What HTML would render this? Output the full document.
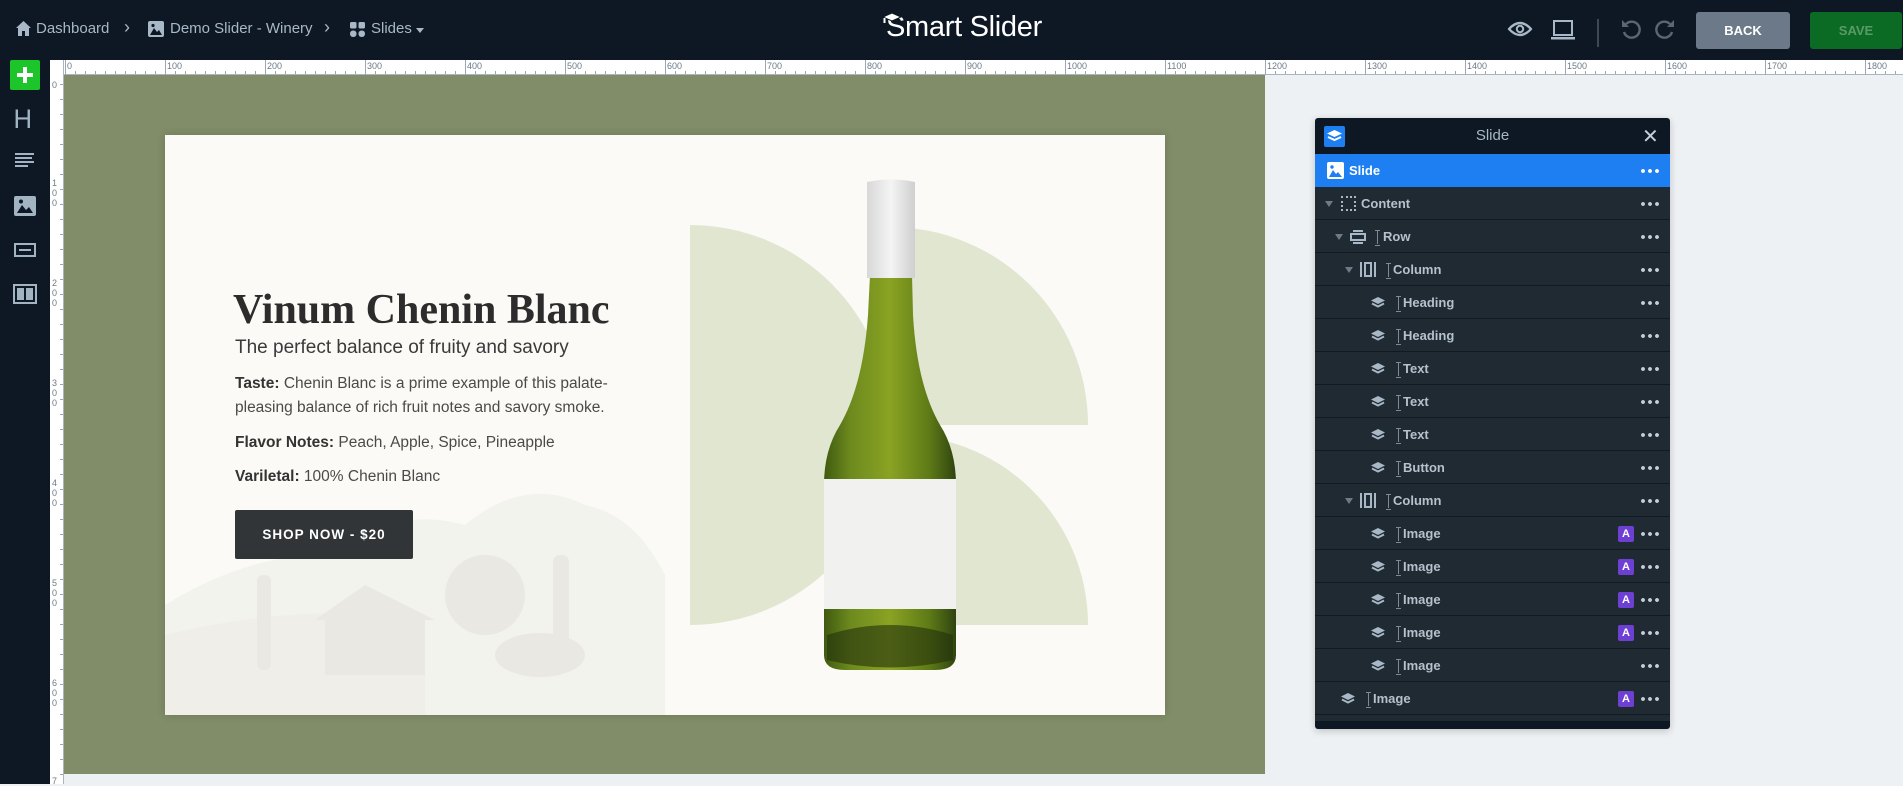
<!DOCTYPE html>
<html><head><meta charset="utf-8"><style>
*{margin:0;padding:0;box-sizing:border-box}
body{width:1903px;height:784px;overflow:hidden;background:#eef1f4;font-family:"Liberation Sans",sans-serif;position:relative}
.abs{position:absolute}
#top{left:0;top:0;width:1903px;height:60px;background:#0d1824}
.bc{top:20px;font-size:15px;color:#a9b8c6;white-space:nowrap}
#side{left:0;top:60px;width:50px;height:724px;background:#0d1824}
#rt{left:50px;top:60px;width:1853px;height:15px;background:#fff;border-bottom:1px solid #aab5c0;
 background-image:repeating-linear-gradient(90deg,#9aa6b2 0 1px,transparent 1px 10px);background-size:100% 4px;background-repeat:no-repeat;background-position:15px 11px}
#rl{left:50px;top:60px;width:14px;height:724px;background:#fff;border-right:1px solid #aab5c0;
 background-image:repeating-linear-gradient(180deg,#9aa6b2 0 1px,transparent 1px 15px);background-size:4px 100%;background-repeat:no-repeat;background-position:10px 24px}
.rlab{font-size:9px;color:#6d7a87;top:61px}
.rmaj{top:60px;width:1px;height:15px;background:#9aa6b2}
.vlab{left:52px;font-size:9px;color:#6d7a87;line-height:10px;width:8px}
#canvas{left:64px;top:75px;width:1201px;height:699px;background:#818c68}
#slide{left:165px;top:135px;width:1000px;height:580px;background:#fbfaf6;overflow:hidden;box-shadow:0 0 8px rgba(0,0,0,.15)}
#panel{left:1315px;top:118px;width:355px;height:611px;background:#0d1824;border-radius:3px;overflow:hidden;box-shadow:0 2px 8px rgba(0,0,0,.2)}
.row{position:absolute;left:0;width:355px;height:33px;background:#1f2a33;border-bottom:1px solid #111a22;color:#b5c1cc;font-size:13px;font-weight:bold}
.row span.t{position:absolute;top:9px}
.dots{position:absolute;right:11px;top:15px;width:18px;height:4px;background:radial-gradient(circle at 2px 2px,#c5cfd8 1.8px,transparent 2px) 0 0/7px 4px repeat-x}
.badge{position:absolute;left:303px;top:9px;width:16px;height:16px;background:#6e3fd3;color:#fff;font-size:11px;text-align:center;line-height:16px;border-radius:2px}
.ib{position:absolute;top:10px;width:6px;height:14px}
.ib:before{content:"";position:absolute;left:2px;top:0;width:1px;height:14px;background:#7d8b97}
.ib:after{content:"";position:absolute;left:0;top:0;width:5px;height:14px;border-top:1px solid #7d8b97;border-bottom:1px solid #7d8b97}
.arr{position:absolute;top:14px;width:0;height:0;border-left:4px solid transparent;border-right:4px solid transparent;border-top:6px solid #6d7a87}
.ly{position:absolute;top:9px}
.p{position:absolute;left:70px;font-size:15.5px;color:#4a4a4a;line-height:24px;white-space:nowrap}
.p b{color:#333}
</style></head><body>
<div id="top" class="abs"></div>
<svg class="abs" style="left:15px;top:20px" width="17" height="17" viewBox="0 0 17 17"><path d="M8.5 1 L1 8 L3 8 L3 16 L7 16 L7 11 L10 11 L10 16 L14 16 L14 8 L16 8 Z" fill="#a9b8c6"/></svg>
<div class="abs bc" style="left:36px">Dashboard</div>
<div class="abs bc" style="left:124px;top:17px;font-size:18px">›</div>
<svg class="abs" style="left:148px;top:21px" width="16" height="16"><rect x="0" y="0" width="16" height="16" rx="2" fill="#a9b8c6"/><path d="M2 14 L6 7 L9 11 L11 9 L14 14Z" fill="#0d1824"/><circle cx="5" cy="4.5" r="1.6" fill="#0d1824"/></svg>
<div class="abs bc" style="left:170px">Demo Slider - Winery</div>
<div class="abs bc" style="left:324px;top:17px;font-size:18px">›</div>
<svg class="abs" style="left:350px;top:22px" width="15" height="15"><rect x="0" y="0" width="6.5" height="6.5" rx="1.5" fill="#a9b8c6"/><rect x="8.5" y="0" width="6.5" height="6.5" rx="1.5" fill="#a9b8c6"/><rect x="0" y="8.5" width="6.5" height="6.5" rx="3" fill="#a9b8c6"/><rect x="8.5" y="8.5" width="6.5" height="6.5" rx="3" fill="#a9b8c6"/></svg>
<div class="abs bc" style="left:371px">Slides</div>
<div class="abs" style="left:416px;top:28px;border-left:4px solid transparent;border-right:4px solid transparent;border-top:5px solid #a9b8c6"></div>
<div class="abs" style="left:886px;top:11px;font-size:29px;color:#fff;letter-spacing:-0.3px">Smart Slider</div>
<svg class="abs" style="left:881px;top:12px" width="22" height="14"><path d="M2 5 L11 1 L20 5 L11 9Z" fill="#fff" stroke="#0d1824" stroke-width="1"/><path d="M3.5 6 v5" stroke="#fff" stroke-width="2"/></svg>
<svg class="abs" style="left:1507px;top:17px" width="26" height="24" viewBox="0 0 26 24"><path d="M2 12 Q13 0 24 12 Q13 24 2 12Z" fill="none" stroke="#a9b8c6" stroke-width="2.4" stroke-linejoin="round"/><circle cx="13" cy="12" r="3.2" fill="none" stroke="#a9b8c6" stroke-width="2"/></svg>
<svg class="abs" style="left:1551px;top:19px" width="24" height="22"><rect x="3" y="2" width="18" height="14" fill="none" stroke="#a9b8c6" stroke-width="2"/><rect x="0" y="18" width="24" height="2.5" fill="#a9b8c6"/></svg>
<div class="abs" style="left:1597px;top:19px;width:2px;height:28px;background:#3c4854"></div>
<svg class="abs" style="left:1620px;top:17px" width="22" height="24" viewBox="0 0 22 24"><path d="M6 7 A8 8 0 1 1 4 15" fill="none" stroke="#5a6674" stroke-width="2.4"/><path d="M2 3 L2 10 L9 10Z" fill="#5a6674"/></svg>
<svg class="abs" style="left:1654px;top:17px" width="22" height="24" viewBox="0 0 22 24"><path d="M16 7 A8 8 0 1 0 18 15" fill="none" stroke="#5a6674" stroke-width="2.4"/><path d="M20 3 L20 10 L13 10Z" fill="#5a6674"/></svg>
<div class="abs" style="left:1696px;top:12px;width:94px;height:37px;background:#6c7988;border-radius:3px;color:#fff;font-weight:bold;font-size:13px;text-align:center;line-height:37px">BACK</div>
<div class="abs" style="left:1810px;top:12px;width:92px;height:37px;background:#0b6b24;border-radius:3px;color:#5a9a67;font-weight:bold;font-size:13px;text-align:center;line-height:37px">SAVE</div>

<div id="side" class="abs"></div>
<div class="abs" style="left:10px;top:60px;width:30px;height:30px;background:#1cc52a;border-radius:2px"></div>
<div class="abs" style="left:17px;top:73px;width:16px;height:4px;background:#fff"></div>
<div class="abs" style="left:23px;top:67px;width:4px;height:16px;background:#fff"></div>
<div class="abs" style="left:13px;top:104px;font-size:27px;color:#a2b3c2;transform:scaleX(.95)">H</div>
<svg class="abs" style="left:15px;top:153px" width="20" height="15"><g fill="#a2b3c2"><rect y="0" width="19" height="2"/><rect y="4" width="17" height="2"/><rect y="8" width="19" height="2"/><rect y="12" width="13" height="2"/></g></svg>
<svg class="abs" style="left:14px;top:196px" width="22" height="20"><rect width="22" height="20" rx="2" fill="#a2b3c2"/><path d="M3 17 L8 9 L12 14 L15 11 L19 17Z" fill="#0d1824"/><circle cx="7" cy="5.5" r="2" fill="#0d1824"/></svg>
<svg class="abs" style="left:14px;top:243px" width="22" height="14"><rect x="1" y="1" width="20" height="12" fill="none" stroke="#a2b3c2" stroke-width="2"/><rect x="5" y="6" width="12" height="2" fill="#a2b3c2"/></svg>
<svg class="abs" style="left:13px;top:284px" width="24" height="20"><rect x="1" y="1" width="22" height="18" fill="none" stroke="#a2b3c2" stroke-width="2"/><rect x="4" y="4" width="7" height="12" fill="#a2b3c2"/><rect x="13" y="4" width="7" height="12" fill="#a2b3c2"/></svg>

<div id="rt" class="abs"></div>
<div id="rl" class="abs"></div>
<div class="abs rmaj" style="left:65px"></div><div class="abs rlab" style="left:67px">0</div>
<div class="abs rmaj" style="left:165px"></div><div class="abs rlab" style="left:167px">100</div>
<div class="abs rmaj" style="left:265px"></div><div class="abs rlab" style="left:267px">200</div>
<div class="abs rmaj" style="left:365px"></div><div class="abs rlab" style="left:367px">300</div>
<div class="abs rmaj" style="left:465px"></div><div class="abs rlab" style="left:467px">400</div>
<div class="abs rmaj" style="left:565px"></div><div class="abs rlab" style="left:567px">500</div>
<div class="abs rmaj" style="left:665px"></div><div class="abs rlab" style="left:667px">600</div>
<div class="abs rmaj" style="left:765px"></div><div class="abs rlab" style="left:767px">700</div>
<div class="abs rmaj" style="left:865px"></div><div class="abs rlab" style="left:867px">800</div>
<div class="abs rmaj" style="left:965px"></div><div class="abs rlab" style="left:967px">900</div>
<div class="abs rmaj" style="left:1065px"></div><div class="abs rlab" style="left:1067px">1000</div>
<div class="abs rmaj" style="left:1165px"></div><div class="abs rlab" style="left:1167px">1100</div>
<div class="abs rmaj" style="left:1265px"></div><div class="abs rlab" style="left:1267px">1200</div>
<div class="abs rmaj" style="left:1365px"></div><div class="abs rlab" style="left:1367px">1300</div>
<div class="abs rmaj" style="left:1465px"></div><div class="abs rlab" style="left:1467px">1400</div>
<div class="abs rmaj" style="left:1565px"></div><div class="abs rlab" style="left:1567px">1500</div>
<div class="abs rmaj" style="left:1665px"></div><div class="abs rlab" style="left:1667px">1600</div>
<div class="abs rmaj" style="left:1765px"></div><div class="abs rlab" style="left:1767px">1700</div>
<div class="abs rmaj" style="left:1865px"></div><div class="abs rlab" style="left:1867px">1800</div>
<div class="abs vlab" style="top:80px">0</div>
<div class="abs vlab" style="top:178px">1<br>0<br>0</div>
<div class="abs vlab" style="top:278px">2<br>0<br>0</div>
<div class="abs vlab" style="top:378px">3<br>0<br>0</div>
<div class="abs vlab" style="top:478px">4<br>0<br>0</div>
<div class="abs vlab" style="top:578px">5<br>0<br>0</div>
<div class="abs vlab" style="top:678px">6<br>0<br>0</div>
<div class="abs vlab" style="top:776px">7</div>

<div id="canvas" class="abs"></div>
<div id="slide" class="abs">
<svg class="abs" style="left:0;top:0" width="1000" height="580">
 <g fill="#efeee9">
  <path d="M0 470 Q80 420 160 420 Q230 370 300 390 Q360 340 420 370 Q470 380 500 440 L500 580 L0 580Z" opacity=".6"/>
  <path d="M0 500 Q120 470 260 480 L260 580 L0 580Z"/>
  <rect x="160" y="480" width="100" height="60" fill="#e9e8e3"/>
  <path d="M150 485 L200 450 L270 485Z" fill="#e9e8e3"/>
  <ellipse cx="320" cy="460" rx="40" ry="40" fill="#e9e8e3"/>
  <rect x="388" y="420" width="16" height="110" rx="7" fill="#e9e8e3"/>
  <rect x="92" y="440" width="14" height="95" rx="6" fill="#e9e8e3"/>
  <ellipse cx="375" cy="520" rx="45" ry="22" fill="#e9e8e3"/>
 </g>
 <g fill="#e1e6d0">
  <path d="M525 90 A200 200 0 0 1 525 490Z"/>
  <path d="M725 92 A198 198 0 0 1 923 290 L725 290Z"/>
  <path d="M725 300 A190 190 0 0 1 923 490 L725 490Z"/>
 </g>
 <defs>
  <linearGradient id="g" x1="0" x2="1"><stop offset="0" stop-color="#3f5a10"/><stop offset=".2" stop-color="#6d8a1e"/><stop offset=".5" stop-color="#8aa323"/><stop offset=".8" stop-color="#5d7a16"/><stop offset="1" stop-color="#2f4410"/></linearGradient>
  <linearGradient id="c" x1="0" x2="1"><stop offset="0" stop-color="#d8d8d8"/><stop offset=".5" stop-color="#f4f4f4"/><stop offset="1" stop-color="#cfcfcf"/></linearGradient>
 </defs>
 <path d="M705 140 L747 140 L748 180 Q752 250 775 290 Q791 315 791 350 L791 520 Q791 535 770 535 L680 535 Q659 535 659 520 L659 350 Q659 315 675 290 Q698 250 703 180Z" fill="url(#g)"/>
 <path d="M702 47 Q726 42 750 47 L750 143 L702 143Z" fill="url(#c)"/>
 <rect x="659" y="344" width="132" height="130" fill="#f1f1f0"/>
 <path d="M662 500 Q725 480 788 500 L788 525 Q725 540 662 525Z" fill="#23300c" opacity=".6"/>
</svg>
<div class="abs" style="left:68px;top:154px;font-family:'Liberation Serif',serif;font-weight:bold;font-size:42px;line-height:42px;color:#2c2c2c;white-space:nowrap">Vinum Chenin Blanc</div>
<div class="abs" style="left:70px;top:202px;font-size:19px;color:#3a3a3a;white-space:nowrap">The perfect balance of fruity and savory</div>
<div class="p" style="top:237px;white-space:normal;width:400px"><b>Taste:</b> Chenin Blanc is a prime example of this palate-pleasing balance of rich fruit notes and savory smoke.</div>
<div class="p" style="top:296px"><b>Flavor Notes:</b> Peach, Apple, Spice, Pineapple</div>
<div class="p" style="top:330px"><b>Variletal:</b> 100% Chenin Blanc</div>
<div class="abs" style="left:70px;top:375px;width:178px;height:49px;background:#323538;border-radius:2px;color:#fff;font-weight:bold;font-size:13.5px;letter-spacing:1px;text-align:center;line-height:49px">SHOP NOW - $20</div>
</div>

<div id="panel" class="abs">
 <div class="abs" style="left:9px;top:8px;width:21px;height:21px;background:#1d7ff2;border-radius:2px"></div>
 <svg class="abs" style="left:12px;top:12px" width="15" height="13"><path d="M7.5 0 L15 3.5 L7.5 7 L0 3.5Z" fill="#fff"/><path d="M1 7 L7.5 10 L14 7" fill="none" stroke="#fff" stroke-width="2"/></svg>
 <div class="abs" style="left:0;top:9px;width:355px;text-align:center;color:#a9b8c6;font-size:15px">Slide</div>
 <div class="abs" style="left:327px;top:6px;color:#c5cfd8;font-size:20px">✕</div>
 <div class="row" style="top:36px;background:#1d7ff2;border:none;color:#fff"><svg class="ly" style="left:12px;top:8px" width="17" height="17"><rect width="17" height="17" rx="2" fill="#fff"/><path d="M2 15 L6 8 L9 12 L11 10 L15 15Z" fill="#1d7ff2"/><circle cx="5" cy="5" r="1.7" fill="#1d7ff2"/></svg><span class="t" style="left:34px">Slide</span><div class="dots" style="background:radial-gradient(circle at 2px 2px,#fff 1.8px,transparent 2px) 0 0/7px 4px repeat-x"></div></div>

 <div class="row" style="top:69px"><i class="arr" style="left:10px"></i><div class="abs" style="left:26px;top:9px;width:15px;height:15px;border:2px dotted #a9b8c6"></div><span class="t" style="left:46px">Content</span><div class="dots"></div></div>
 <div class="row" style="top:102px"><i class="arr" style="left:20px"></i><svg class="ly" style="left:35px;top:10px" width="16" height="14"><rect x="3" y="0" width="10" height="2" fill="#a9b8c6"/><rect x="1" y="4" width="14" height="6" fill="none" stroke="#a9b8c6" stroke-width="2"/><rect x="3" y="12" width="10" height="2" fill="#a9b8c6"/></svg><i class="ib" style="left:60px"></i><span class="t" style="left:68px">Row</span><div class="dots"></div></div>
 <div class="row" style="top:135px"><i class="arr" style="left:30px"></i><svg class="ly" style="left:45px" width="16" height="15"><rect x="0" y="0" width="2" height="15" fill="#a9b8c6"/><rect x="5" y="1" width="6" height="13" fill="none" stroke="#a9b8c6" stroke-width="2"/><rect x="14" y="0" width="2" height="15" fill="#a9b8c6"/></svg><i class="ib" style="left:71px"></i><span class="t" style="left:78px">Column</span><div class="dots"></div></div>
</div>
<svg width="0" height="0" style="position:absolute"><defs><g id="lyr"><path d="M7 0 L14 3.5 L7 7 L0 3.5Z" fill="#a9b8c6"/><path d="M1 6.5 L7 9.5 L13 6.5" fill="none" stroke="#a9b8c6" stroke-width="2"/></g></defs></svg>
<div class="abs" style="left:1315px;top:286px;width:355px">
 <div class="row" style="top:0"><svg class="ly" style="left:56px;top:11px" width="14" height="11"><use href="#lyr"/></svg><i class="ib" style="left:81px"></i><span class="t" style="left:88px">Heading</span><div class="dots"></div></div>
 <div class="row" style="top:33px"><svg class="ly" style="left:56px;top:11px" width="14" height="11"><use href="#lyr"/></svg><i class="ib" style="left:81px"></i><span class="t" style="left:88px">Heading</span><div class="dots"></div></div>
 <div class="row" style="top:66px"><svg class="ly" style="left:56px;top:11px" width="14" height="11"><use href="#lyr"/></svg><i class="ib" style="left:81px"></i><span class="t" style="left:88px">Text</span><div class="dots"></div></div>
 <div class="row" style="top:99px"><svg class="ly" style="left:56px;top:11px" width="14" height="11"><use href="#lyr"/></svg><i class="ib" style="left:81px"></i><span class="t" style="left:88px">Text</span><div class="dots"></div></div>
 <div class="row" style="top:132px"><svg class="ly" style="left:56px;top:11px" width="14" height="11"><use href="#lyr"/></svg><i class="ib" style="left:81px"></i><span class="t" style="left:88px">Text</span><div class="dots"></div></div>
 <div class="row" style="top:165px"><svg class="ly" style="left:56px;top:11px" width="14" height="11"><use href="#lyr"/></svg><i class="ib" style="left:81px"></i><span class="t" style="left:88px">Button</span><div class="dots"></div></div>
 <div class="row" style="top:198px"><i class="arr" style="left:30px"></i><svg class="ly" style="left:45px" width="16" height="15"><rect x="0" y="0" width="2" height="15" fill="#a9b8c6"/><rect x="5" y="1" width="6" height="13" fill="none" stroke="#a9b8c6" stroke-width="2"/><rect x="14" y="0" width="2" height="15" fill="#a9b8c6"/></svg><i class="ib" style="left:71px"></i><span class="t" style="left:78px">Column</span><div class="dots"></div></div>
 <div class="row" style="top:231px"><svg class="ly" style="left:56px;top:11px" width="14" height="11"><use href="#lyr"/></svg><i class="ib" style="left:81px"></i><span class="t" style="left:88px">Image</span><div class="badge">A</div><div class="dots"></div></div>
 <div class="row" style="top:264px"><svg class="ly" style="left:56px;top:11px" width="14" height="11"><use href="#lyr"/></svg><i class="ib" style="left:81px"></i><span class="t" style="left:88px">Image</span><div class="badge">A</div><div class="dots"></div></div>
 <div class="row" style="top:297px"><svg class="ly" style="left:56px;top:11px" width="14" height="11"><use href="#lyr"/></svg><i class="ib" style="left:81px"></i><span class="t" style="left:88px">Image</span><div class="badge">A</div><div class="dots"></div></div>
 <div class="row" style="top:330px"><svg class="ly" style="left:56px;top:11px" width="14" height="11"><use href="#lyr"/></svg><i class="ib" style="left:81px"></i><span class="t" style="left:88px">Image</span><div class="badge">A</div><div class="dots"></div></div>
 <div class="row" style="top:363px"><svg class="ly" style="left:56px;top:11px" width="14" height="11"><use href="#lyr"/></svg><i class="ib" style="left:81px"></i><span class="t" style="left:88px">Image</span><div class="dots"></div></div>
 <div class="row" style="top:396px"><svg class="ly" style="left:26px;top:11px" width="14" height="11"><use href="#lyr"/></svg><i class="ib" style="left:51px"></i><span class="t" style="left:58px">Image</span><div class="badge">A</div><div class="dots"></div></div>
 <div class="row" style="top:429px;height:6px;border:none"></div>
</div>
</body></html>
